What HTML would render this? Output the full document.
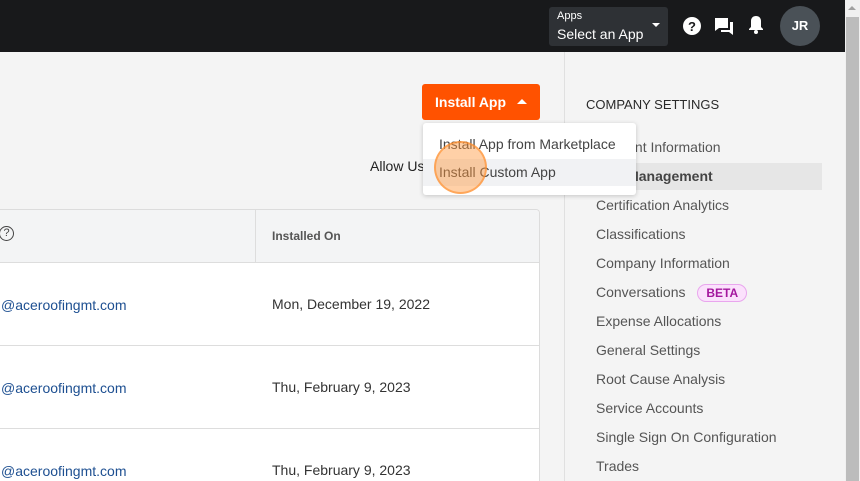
<!DOCTYPE html>
<html style="overflow:hidden;height:481px"><head><style>
*{margin:0;padding:0;box-sizing:border-box}
html,body{width:860px;height:481px;overflow:hidden}
body{background:#f4f4f4;font-family:"Liberation Sans",sans-serif;position:relative}
.top{position:absolute;left:0;top:0;width:845px;height:52px;background:#18191b}
.sel{position:absolute;left:549px;top:7px;width:119px;height:39px;background:#2e3135;border-radius:3px;color:#fff}
.sel .a{position:absolute;left:8px;top:3px;font-size:11px}
.sel .b{position:absolute;left:8px;top:19px;font-size:14px}
.av{position:absolute;left:780px;top:6px;width:40px;height:40px;border-radius:50%;background:#4a5157;color:#fff;font-weight:bold;font-size:13px;text-align:center;line-height:40px}
.sb{position:absolute;left:845px;top:0;width:15px;height:481px;background:#f0f0f0;z-index:10}
.th{position:absolute;left:1px;top:17px;width:13px;height:464px;background:#bcbcbc}
.side{position:absolute;left:564px;top:52px;width:281px;height:429px;border-left:1px solid #e0e0e0;background:#f4f4f4}
.h{position:absolute;left:586px;top:97px;font-size:13px;color:#2a2a2a}
.it{position:absolute;left:596px;font-size:14px;color:#555;line-height:16px}
.hl{position:absolute;left:586px;top:163px;width:236px;height:27px;background:#e6e6e6}
.btn{position:absolute;left:422px;top:84px;width:118px;height:36px;background:#ff5200;border-radius:3px;color:#fff;font-weight:bold;font-size:14px;line-height:36px;padding-left:13px}
.btn i{position:absolute;left:95px;top:15px;border-left:5px solid transparent;border-right:5px solid transparent;border-bottom:5px solid #fff}
.dd{position:absolute;left:423px;top:123px;width:213px;height:72px;background:#fff;border-radius:3px;box-shadow:0 1px 5px rgba(0,0,0,.2)}
.dd div{position:absolute;left:16px;font-size:14px;color:#444}
.tbl{position:absolute;left:-5px;top:209px;width:545px;height:272px;background:#fff;border:1px solid #dcdcdc;border-bottom:0;border-radius:4px 4px 0 0;overflow:hidden}
.thd{position:absolute;left:0;top:0;width:100%;height:53px;background:#f3f4f5;border-bottom:1px solid #ddd}
.row{position:absolute;left:0;width:100%;border-bottom:1px solid #ddd}
.em{position:absolute;left:5px;font-size:14px;color:#1d4f91}
.dt{position:absolute;left:276px;font-size:14px;color:#333}
</style></head><body>
<div class="top"></div>
<div class="sel"><div class="a">Apps</div><div class="b">Select an App</div><span style="position:absolute;left:103px;top:16px;border-left:4px solid transparent;border-right:4px solid transparent;border-top:4px solid #fff"></span></div>
<svg style="position:absolute;left:682px;top:16px" width="20" height="20" viewBox="0 0 20 20"><circle cx="10" cy="10" r="9" fill="#fff"/><text x="10" y="15" text-anchor="middle" font-family="Liberation Sans" font-weight="bold" font-size="13" fill="#18191b">?</text></svg>
<svg style="position:absolute;left:714px;top:16px" width="20" height="20" viewBox="0 0 20 20"><path d="M1 2h13v10H5l-4 3z" fill="#fff"/><path d="M16 6h3v13l-4-3H7v-2h9z" fill="#fff"/></svg>
<svg style="position:absolute;left:748px;top:15px" width="16" height="20" viewBox="0 0 16 20"><path d="M8 1c-3 0-5 2-5 5v6l-2 2v1h14v-1l-2-2V6c0-3-2-5-5-5z" fill="#fff"/><circle cx="8" cy="17" r="2" fill="#fff"/></svg>
<div class="av">JR</div>
<div class="side"></div>
<div class="hl"></div>
<div class="h">COMPANY SETTINGS</div>
<div class="it" style="top:139px">Account Information</div>
<div class="it" style="top:168px;font-weight:bold;color:#444">App Management</div>
<div class="it" style="top:197px">Certification Analytics</div>
<div class="it" style="top:226px">Classifications</div>
<div class="it" style="top:255px">Company Information</div>
<div class="it" style="top:284px">Conversations <span style="display:inline-block;margin-left:8px;padding:0 8px;border:1px solid #e9a6ee;background:#fbe1fc;color:#a4179e;border-radius:9px;font-size:12px;font-weight:bold;line-height:16px">BETA</span></div>
<div class="it" style="top:313px">Expense Allocations</div>
<div class="it" style="top:342px">General Settings</div>
<div class="it" style="top:371px">Root Cause Analysis</div>
<div class="it" style="top:400px">Service Accounts</div>
<div class="it" style="top:429px">Single Sign On Configuration</div>
<div class="it" style="top:458px">Trades</div>
<div style="position:absolute;left:370px;top:158px;font-size:14px;color:#222">Allow Use</div>
<div class="tbl">
<div class="thd"><div style="position:absolute;left:259px;top:0;width:1px;height:53px;background:#ddd"></div>
<div style="position:absolute;left:3px;top:16px;width:15px;height:15px;border:1.5px solid #444;border-radius:50%;font-size:11px;text-align:center;line-height:12px;color:#444">?</div>
<div style="position:absolute;left:276px;top:19px;font-size:12px;font-weight:bold;color:#555">Installed On</div></div>
<div class="row" style="top:53px;height:83px"><div class="em" style="top:34px">@aceroofingmt.com</div><div class="dt" style="top:33px">Mon, December 19, 2022</div></div>
<div class="row" style="top:136px;height:83px"><div class="em" style="top:34px">@aceroofingmt.com</div><div class="dt" style="top:33px">Thu, February 9, 2023</div></div>
<div class="row" style="top:219px;height:52px;border:0"><div class="em" style="top:34px;line-height:16px">@aceroofingmt.com</div><div class="dt" style="top:33px;line-height:16px">Thu, February 9, 2023</div></div>
</div>
<div class="btn">Install App<i></i></div>
<div class="dd"><div style="top:13px">Install App from Marketplace</div><div style="top:36px;left:0;width:100%;height:27px;background:#f1f2f4"></div><div style="top:41px">Install Custom App</div></div>
<div style="position:absolute;left:434px;top:141px;width:53px;height:53px;border-radius:50%;background:rgba(255,150,60,.45);border:2px solid rgba(255,140,40,.6)"></div>
<div class="sb"><div class="th"></div><span style="position:absolute;left:3px;top:6px;border-left:4px solid transparent;border-right:4px solid transparent;border-bottom:4px solid #a0a0a0"></span></div>
</body></html>
